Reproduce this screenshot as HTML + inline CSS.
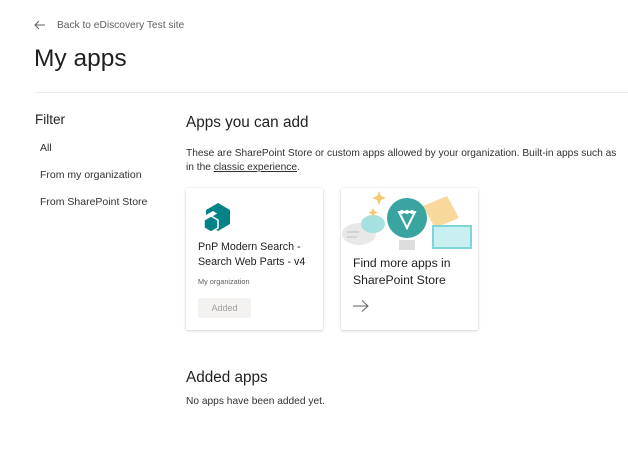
<!DOCTYPE html>
<html><head><meta charset="utf-8"><style>
*{margin:0;padding:0;box-sizing:border-box}
body{width:628px;height:472px;background:#fff;font-family:"Liberation Sans",sans-serif;color:#323130;position:relative;overflow:hidden}
.a{position:absolute;white-space:nowrap}
.card{position:absolute;background:#fff;border-radius:2px;box-shadow:0 1px 3px rgba(0,0,0,.18),0 0 1px rgba(0,0,0,.1)}
</style></head><body>
<svg class="a" style="left:34px;top:20px" width="12" height="10" viewBox="0 0 12 10"><path d="M11 5H1M5 1L1 5l4 4" fill="none" stroke="#605e5c" stroke-width="1"/></svg>
<div class="a" style="left:57px;top:20px;font-size:10.2px;color:#605e5c">Back to eDiscovery Test site</div>
<div class="a" style="left:34px;top:45px;font-size:24.5px;color:#201f1e">My apps</div>
<div class="a" style="left:35px;top:92px;width:593px;height:1px;background:#edebe9"></div>
<div class="a" style="left:35px;top:112px;font-size:13.5px;color:#201f1e">Filter</div>
<div class="a" style="left:40px;top:142px;font-size:10.5px">All</div>
<div class="a" style="left:40px;top:169px;font-size:10.5px">From my organization</div>
<div class="a" style="left:40px;top:196px;font-size:10.5px">From SharePoint Store</div>
<div class="a" style="left:186px;top:114px;font-size:15.3px;color:#201f1e">Apps you can add</div>
<div class="a" style="left:186px;top:147px;font-size:10.2px;line-height:14px">These are SharePoint Store or custom apps allowed by your organization. Built-in apps such as<br>in the <span style="text-decoration:underline">classic experience</span>.</div>
<div class="card" style="left:186px;top:188px;width:137px;height:142px">
<svg class="a" style="left:16px;top:14px" width="30" height="32" viewBox="0 0 30 32"><path d="M16 1l12 7v14l-12 7-5-3V14l5-3V1z" fill="#038387"/><path d="M16 1L4 8v5l7-4 5 3z" fill="#038387"/><path d="M9 14l7 4v8l-7 4-7-4v-8z" fill="#038387" stroke="#fff" stroke-width="1.5"/></svg>
<div class="a" style="left:12px;top:52px;font-size:10.7px;line-height:15px;color:#201f1e">PnP Modern Search -<br>Search Web Parts - v4</div>
<div class="a" style="left:12px;top:89px;font-size:7.3px;color:#605e5c">My organization</div>
<div class="a" style="left:12px;top:110px;width:53px;height:20px;background:#f3f2f1;border-radius:2px;font-size:9px;color:#a19f9d;text-align:center;line-height:20px">Added</div>
</div>
<div class="card" style="left:341px;top:188px;width:137px;height:142px;overflow:hidden">
<svg class="a" style="left:0;top:0" width="137" height="70" viewBox="0 0 137 70">
<ellipse cx="18" cy="46" rx="17" ry="11" fill="#e8e8e8"/><path d="M6 44h12M6 49h10" stroke="#ccc" stroke-width="1.5"/>
<ellipse cx="32" cy="36" rx="12" ry="9" fill="#a6e0e0"/>
<path d="M38 3l2 5 5 2-5 2-2 5-2-5-5-2 5-2z" fill="#f7c873"/><path d="M32 20l1.5 3 3 1.5-3 1.5-1.5 3-1.5-3-3-1.5 3-1.5z" fill="#f7c873"/>
<path d="M82 18l24-10 12 22-24 10z" fill="#f9d89c"/>
<rect x="92" y="38" width="38" height="22" fill="#c8f0f0" stroke="#7fd4d4" stroke-width="2"/>
<circle cx="66" cy="30" r="20" fill="#3aa5a0"/><path d="M58 24l8 16 8-16z" fill="none" stroke="#fff" stroke-width="2"/>
<circle cx="61" cy="24" r="2" fill="#fff"/><circle cx="66" cy="24" r="2" fill="#fff"/><circle cx="71" cy="24" r="2" fill="#fff"/>
<rect x="58" y="52" width="16" height="10" fill="#ddd"/></svg>
<div class="a" style="left:12px;top:67px;font-size:12.2px;line-height:17px;color:#201f1e">Find more apps in<br>SharePoint Store</div>
<svg class="a" style="left:12px;top:112px" width="16" height="12" viewBox="0 0 16 12"><path d="M0 6h15M9 0.5L15 6l-6 5.5" fill="none" stroke="#605e5c" stroke-width="1"/></svg>
</div>
<div class="a" style="left:186px;top:369px;font-size:15.3px;color:#201f1e">Added apps</div>
<div class="a" style="left:186px;top:396px;font-size:10.2px">No apps have been added yet.</div>
</body></html>
